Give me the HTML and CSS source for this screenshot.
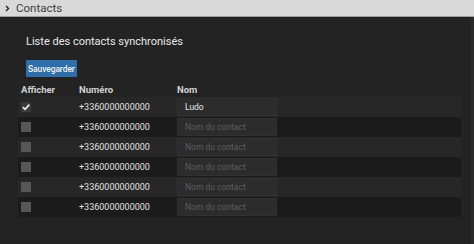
FILE: index.html
```html
<!DOCTYPE html>
<html lang="fr">
<head>
<meta charset="utf-8">
<link rel="stylesheet" href="styles.css">
</head>
<body>
<div class="topbar">
  <svg class="chev" width="5" height="7" viewBox="0 0 5 7"><path d="M1 1 L3.5 3.5 L1 6" fill="none" stroke="#222" stroke-width="1.4"/></svg>
  <span>Contacts</span>
</div>
<div class="panel">
  <div class="title">Liste des contacts synchronisés</div>
  <button class="btn">Sauvegarder</button>
  <div class="table">
    <div class="row head">
      <div class="c1">Afficher</div>
      <div class="c2">Numéro</div>
      <div class="c3">Nom</div>
    </div>
    <div class="row light">
      <div class="c1"><span class="cb checked"><svg width="10" height="10" viewBox="0 0 10 10"><path d="M1.8 5.2 L4 7.3 L8.3 2.6" fill="none" stroke="#eee" stroke-width="1.6"/></svg></span></div>
      <div class="c2">+3360000000000</div>
      <div class="c3"><input class="inp" type="text" value="Ludo" placeholder="Nom du contact"></div>
    </div>
    <div class="row dark">
      <div class="c1"><span class="cb"></span></div>
      <div class="c2">+3360000000000</div>
      <div class="c3"><input class="inp" type="text" placeholder="Nom du contact"></div>
    </div>
    <div class="row light">
      <div class="c1"><span class="cb"></span></div>
      <div class="c2">+3360000000000</div>
      <div class="c3"><input class="inp" type="text" placeholder="Nom du contact"></div>
    </div>
    <div class="row dark">
      <div class="c1"><span class="cb"></span></div>
      <div class="c2">+3360000000000</div>
      <div class="c3"><input class="inp" type="text" placeholder="Nom du contact"></div>
    </div>
    <div class="row light">
      <div class="c1"><span class="cb"></span></div>
      <div class="c2">+3360000000000</div>
      <div class="c3"><input class="inp" type="text" placeholder="Nom du contact"></div>
    </div>
    <div class="row dark">
      <div class="c1"><span class="cb"></span></div>
      <div class="c2">+3360000000000</div>
      <div class="c3"><input class="inp" type="text" placeholder="Nom du contact"></div>
    </div>
  </div>
</div>
</body>
</html>
```
FILE: styles.css
```css
html, body {
  margin: 0;
  padding: 0;
  height: 100%;
}
body {
  background: #232324;
  font-family: Roboto, "Liberation Sans", sans-serif;
  overflow: hidden;
}
.topbar {
  height: 16px;
  background: #d9d9d9;
  border-bottom: 1px solid #9c9c9c;
  display: flex;
  align-items: center;
  gap: 6px;
  padding-left: 5px;
  font-size: 11.5px;
  color: #3c3c3c;
}
.chev {
  display: block;
}
.panel {
  padding: 18px 0 0 18px;
  border-right: 3px solid #2a2a2b;
  height: calc(100% - 17px);
  box-sizing: border-box;
  width: 474px;
}
.title {
  margin-left: 8px;
  font-size: 11px;
  line-height: 14px;
  color: #e8e8e8;
}
.btn {
  display: block;
  margin: 11px 0 0 8px;
  height: 17px;
  padding: 0 2px;
  border: none;
  border-radius: 1px;
  background: #2f6ea8;
  color: #f2f2f2;
  font-family: Roboto, "Liberation Sans", sans-serif;
  font-size: 8.5px;
  font-weight: 500;
  letter-spacing: -0.1px;
}
.table {
  width: 443px;
  margin-top: 4px;
}
.row {
  display: flex;
  align-items: center;
  height: 20px;
  font-size: 9px;
  color: #e0e0e0;
}
.row.head {
  height: 16px;
  font-weight: 700;
  color: #d0d0d0;
  font-size: 9.5px;
}
.row.light {
  background: #272728;
}
.row.dark {
  background: #1b1b1c;
}
.c1 {
  width: 58px;
  padding-left: 3px;
  display: flex;
  align-items: center;
}
.c2 {
  width: 98px;
}
.c3 {
  flex: 1;
  display: flex;
  align-items: center;
}
.cb {
  width: 10px;
  height: 10px;
  background: #575757;
  display: block;
}
.cb.checked {
  background: #3a3a3b;
}
.cb svg {
  display: block;
}
.inp {
  width: 100px;
  height: 18px;
  box-sizing: border-box;
  background: #2c2c2d;
  border: 1px solid #313132;
  padding: 0 0 0 7px;
  margin: 0;
  font-family: Roboto, "Liberation Sans", sans-serif;
  font-size: 8.5px;
  color: #e6e6e6;
  outline: none;
}
.inp::placeholder {
  color: #5e5e5e;
}
```
